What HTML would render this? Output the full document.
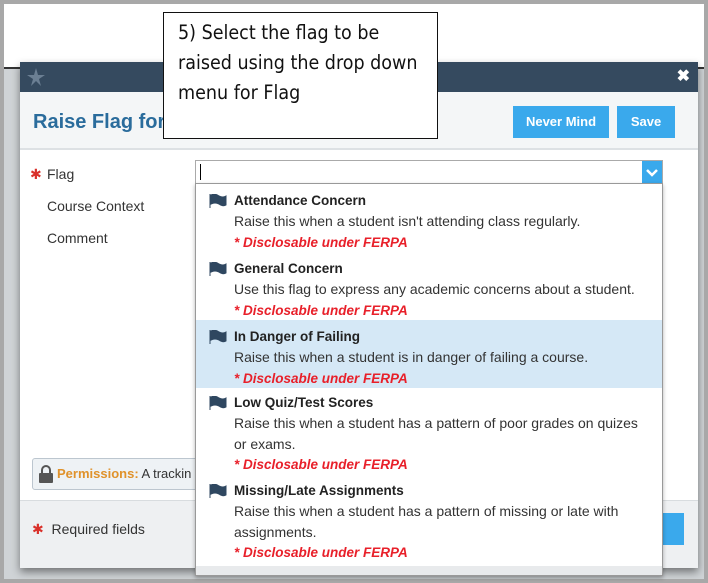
<!DOCTYPE html>
<html><head><style>
*{margin:0;padding:0;box-sizing:border-box}
body{width:708px;height:583px;position:relative;overflow:hidden;font-family:"Liberation Sans",Arial,sans-serif;background:#a8a8a8}
.frame{position:absolute;left:4px;top:4px;width:700px;height:575px;background:#cfd3d6;overflow:hidden}
.top{position:absolute;left:0;top:0;width:700px;height:65px;background:#fff;border-bottom:2px solid #333}
.modal{position:absolute;left:16px;top:58px;width:678px;height:506px;background:#f4f6f7;box-shadow:0 4px 8px rgba(0,0,0,.45)}
.hdr{height:30px;background:#354a5f;position:relative}
.hdr .x{position:absolute;right:8px;top:4px;color:#fff;font-weight:bold;font-size:16px}
.title{position:absolute;left:13px;top:49px;font-size:20px;font-weight:bold;color:#2a6c9c}
.btn{position:absolute;top:44px;height:32px;background:#3aa9ec;color:#fff;font-weight:bold;font-size:13px;line-height:32px;text-align:center}
.sep{position:absolute;left:0;top:86px;width:678px;height:2px;background:#dde1e4}
.body{position:absolute;left:0;top:88px;width:678px;height:350px;background:#fff}
.lbl{position:absolute;left:27px;font-size:14px;color:#333}
.star{color:#d9302a;position:absolute;left:-17px}
.perm{position:absolute;left:12px;top:396px;width:200px;height:32px;border:1px solid #bcc6cf;border-radius:3px;background:#eef2f5;font-size:13px;line-height:30px;padding-left:24px;color:#333}
.foot{position:absolute;left:0;top:438px;width:678px;height:68px;background:#eef0f2;border-top:1px solid #d8dcdf}
.input{position:absolute;left:195px;top:160px;width:468px;height:24px;border:1px solid #aaa;background:#fff}
.input .arr{position:absolute;right:0;top:0;width:20px;height:22px;background:#3aa9ec}
.dd{position:absolute;left:195px;top:183px;width:468px;height:393px;background:#fff;border:1px solid #999;box-shadow:0 2px 4px rgba(0,0,0,.3)}
.it{position:absolute;left:0;width:466px;padding-left:38px;font-size:14px;color:#333;line-height:20.4px}
.it b{font-size:13.5px;color:#222}
.it i{color:#e8202a;font-weight:bold;font-size:13.5px}
.fl{position:absolute;left:13px;top:4px}
.call{position:absolute;left:163px;top:12px;width:275px;height:127px;background:#fff;border:1.5px solid #111;padding:5px 14px;font-size:19.5px;line-height:30px;color:#111;font-family:"DejaVu Sans Condensed","Liberation Sans",sans-serif}
</style></head><body>
<div class="frame">
<div class="top"></div>
<div class="modal">
 <div class="hdr"><svg style="position:absolute;left:6px;top:5px" width="20" height="20" viewBox="0 0 20 20"><path d="M10 1 L12 8 L19 8 L13 12 L15 19 L10 14 L5 19 L7 12 L1 8 L8 8Z" fill="#6b7f93"/></svg><span class="x">✖</span></div>
 <div class="title">Raise Flag for</div>
 <div class="btn" style="left:493px;width:96px">Never Mind</div>
 <div class="btn" style="left:597px;width:58px">Save</div>
 <div class="sep"></div>
 <div class="body">
  <div class="lbl" style="top:16px"><span class="star">✱</span>Flag</div>
  <div class="lbl" style="top:48px">Course Context</div>
  <div class="lbl" style="top:80px">Comment</div>
 </div>
 <div class="perm"><svg style="position:absolute;left:6px;top:6px" width="14" height="18" viewBox="0 0 14 18"><path d="M3 8V5a4 4 0 0 1 8 0v3" stroke="#555" stroke-width="2" fill="none"/><rect x="0" y="8" width="14" height="10" rx="1" fill="#555"/></svg><span style="color:#e0922b;font-weight:bold">Permissions:</span> A trackin</div>
 <div class="foot"><div style="position:absolute;left:12px;top:20px;font-size:14px;color:#333"><span style="color:#d9302a">✱</span>&nbsp; Required fields</div><div style="position:absolute;left:630px;top:12px;width:34px;height:32px;background:#3aa9ec"></div></div>
</div>
</div>
<div class="input"><div style="position:absolute;left:4px;top:3px;width:1px;height:16px;background:#000"></div><div class="arr"><svg width="20" height="22"><path d="M5 9 L10 14 L15 9" stroke="#fff" stroke-width="2.5" fill="none"/></svg></div></div>
<div class="dd">
 <div class="it" style="top:6px"><svg class="fl" width="18" height="14"><path d="M1 0V14M2 1 Q6 -1 10 2 Q14 4 17 2 V11 Q14 13 10 10 Q6 8 2 10Z" fill="#2f4760" stroke="#2f4760"/></svg><b>Attendance Concern</b><br>Raise this when a student isn't attending class regularly.<br><i>* Disclosable under FERPA</i></div>
 <div class="it" style="top:74px"><svg class="fl" width="18" height="14"><path d="M1 0V14M2 1 Q6 -1 10 2 Q14 4 17 2 V11 Q14 13 10 10 Q6 8 2 10Z" fill="#2f4760" stroke="#2f4760"/></svg><b>General Concern</b><br>Use this flag to express any academic concerns about a student.<br><i>* Disclosable under FERPA</i></div>
 <div class="it" style="top:136px;height:68px;padding-top:6px;background:#d5e8f6"><svg class="fl" style="top:10px" width="18" height="14"><path d="M1 0V14M2 1 Q6 -1 10 2 Q14 4 17 2 V11 Q14 13 10 10 Q6 8 2 10Z" fill="#2f4760" stroke="#2f4760"/></svg><b>In Danger of Failing</b><br>Raise this when a student is in danger of failing a course.<br><i>* Disclosable under FERPA</i></div>
 <div class="it" style="top:208px"><svg class="fl" width="18" height="14"><path d="M1 0V14M2 1 Q6 -1 10 2 Q14 4 17 2 V11 Q14 13 10 10 Q6 8 2 10Z" fill="#2f4760" stroke="#2f4760"/></svg><b>Low Quiz/Test Scores</b><br>Raise this when a student has a pattern of poor grades on quizes<br>or exams.<br><i>* Disclosable under FERPA</i></div>
 <div class="it" style="top:296px"><svg class="fl" width="18" height="14"><path d="M1 0V14M2 1 Q6 -1 10 2 Q14 4 17 2 V11 Q14 13 10 10 Q6 8 2 10Z" fill="#2f4760" stroke="#2f4760"/></svg><b>Missing/Late Assignments</b><br>Raise this when a student has a pattern of missing or late with<br>assignments.<br><i>* Disclosable under FERPA</i></div>
 <div style="position:absolute;left:0;bottom:0;width:466px;height:9px;background:#e8eaec"></div>
</div>
<div class="call">5) Select the flag to be raised using the drop down menu for Flag</div>
</body></html>
